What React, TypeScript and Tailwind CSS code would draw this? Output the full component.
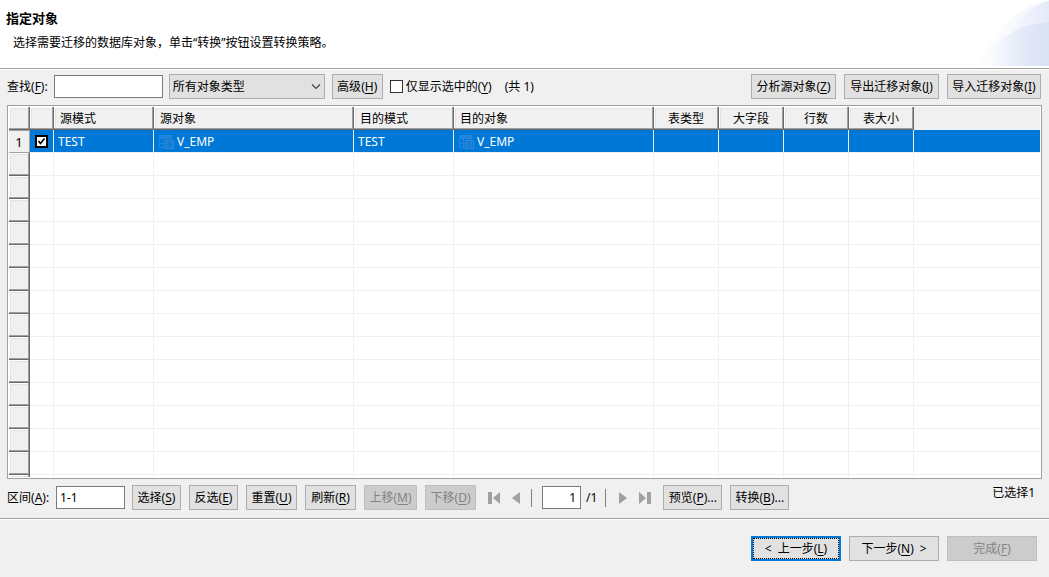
import type { ReactNode } from "react";
import clsx from "clsx";

type Column = { label: string; width: string; center?: boolean };

const columns: Column[] = [
  { label: "源模式", width: "w-[100px]" },
  { label: "源对象", width: "w-[200px]" },
  { label: "目的模式", width: "w-[100px]" },
  { label: "目的对象", width: "w-[200px]" },
  { label: "表类型", width: "w-[65px]", center: true },
  { label: "大字段", width: "w-[65px]", center: true },
  { label: "行数", width: "w-[65px]", center: true },
  { label: "表大小", width: "w-[65px]", center: true },
];

const emptyRows = Array.from({ length: 60 }, (_, i) => i);

const bevel =
  "border-r border-b border-[#696969] bg-[#f0f0f0] shadow-[inset_-1px_-1px_0_#a0a0a0,inset_1px_1px_0_#ffffff,inset_2px_2px_0_#e3e3e3]";

function Key({ children }: { children: string }) {
  return (
    <>
      (<span className="underline underline-offset-2">{children}</span>)
    </>
  );
}

type ButtonProps = { children: ReactNode; width: string; disabled?: boolean; focused?: boolean };

function Button({ children, width, disabled, focused }: ButtonProps) {
  return (
    <button
      type="button"
      disabled={disabled}
      className={clsx(
        "flex h-[25px] shrink-0 items-center justify-center whitespace-pre",
        width,
        disabled ? "border border-[#bfbfbf] bg-[#cccccc] text-[#838383]" : "bg-[#e1e1e1]",
        !disabled && !focused && "border border-[#adadad]",
        focused && "border-2 border-[#0078d7] outline-1 -outline-offset-3 outline-dotted outline-black",
      )}
    >
      {children}
    </button>
  );
}

function ViewIcon() {
  return (
    <svg width="15" height="14" viewBox="0 0 15 14" className="shrink-0" aria-hidden="true">
      <path d="M0 0h13v4H0z" fill="#2285dd" />
      <path d="M.5 4v8.500h6M.5 8.500h6M4.500 4v8.500M8.500 4v2M12.500 4v2" fill="none" stroke="#2285dd" />
      <path d="M6.500 5.500h8v8h-8z" fill="#0c78d4" stroke="#328bdb" />
      <path d="M8 7h2v1H9v1H8zM11 7h2v2h-1V8h-1zM8 10h1v1h1v1H8zM12 10h1v2h-2v-1h1zM10 9h1v1h-1z" fill="#328bdb" />
    </svg>
  );
}

function PagerButton({ label, width, path }: { label: string; width: number; path: string }) {
  return (
    <button type="button" aria-label={label} disabled className="shrink-0">
      <svg width={width} height="12" viewBox={`0 0 ${width} 12`} fill="#a0a0a0">
        <path d={path} />
      </svg>
    </button>
  );
}

function Banner() {
  return (
    <header className="relative h-[68px] shrink-0 bg-white px-1.5 pt-2.5">
      <svg className="absolute top-0 right-0" width="80" height="66" viewBox="0 0 80 66" aria-hidden="true">
        <defs>
          <linearGradient id="outer" x1="0" x2="1" y1="0" y2="0">
            <stop offset="0" stopColor="#ffffff" />
            <stop offset=".2" stopColor="#fdfdff" />
            <stop offset="1" stopColor="#f2f5fc" />
          </linearGradient>
          <linearGradient id="middle" x1="0" x2="1" y1="0" y2="0">
            <stop offset="0" stopColor="#f4f7fd" stopOpacity="0" />
            <stop offset="1" stopColor="#e4eaf8" />
          </linearGradient>
          <linearGradient id="inner" x1="0" x2="1" y1="0" y2="0">
            <stop offset="0" stopColor="#dae2f5" stopOpacity="0" />
            <stop offset=".25" stopColor="#dae2f5" stopOpacity=".1" />
            <stop offset="1" stopColor="#dae2f5" />
          </linearGradient>
        </defs>
        <path d="M6 66C20 36 44 8 80 0v66z" fill="url(#outer)" />
        <path d="M24 66C36 34 54 8 80 1v65z" fill="url(#middle)" />
        <path d="M6 66C22 42 48 24 80 22v44z" fill="url(#inner)" />
      </svg>
      <h1 className="text-[13px] leading-4 font-bold">指定对象</h1>
      <p className="mt-[9px] pl-[7px] leading-4">选择需要迁移的数据库对象，单击“转换”按钮设置转换策略。</p>
    </header>
  );
}

function Toolbar() {
  return (
    <div className="flex items-center px-2 pt-1 pb-1.5">
      <label htmlFor="search" className="mr-1.5 -ml-px shrink-0">
        查找<Key>F</Key>:
      </label>
      <input id="search" className="h-[23px] w-[109px] border border-[#7a7a7a] bg-white px-1 outline-none" />
      <div className="relative ml-1.5">
        <select
          aria-label="对象类型"
          className="h-[25px] w-[156px] appearance-none border border-[#adadad] bg-[#e1e1e1] px-[3px] outline-none"
        >
          <option>所有对象类型</option>
        </select>
        <svg className="pointer-events-none absolute top-2.5 right-1" width="10" height="6" viewBox="0 0 10 6" aria-hidden="true">
          <path d="M1 .5l4 4 4-4" fill="none" stroke="#444444" strokeWidth="1.200" />
        </svg>
      </div>
      <div className="ml-[7px] flex items-center gap-[7px]">
        <Button width="w-[51px]">
          高级<Key>H</Key>
        </Button>
        <label className="flex items-center gap-[3px] whitespace-nowrap">
          <input type="checkbox" className="size-[13px] appearance-none border border-[#333333] bg-white" />
          <span>
            仅显示选中的<Key>Y</Key>
          </span>
        </label>
        <span className="ml-1.5 whitespace-nowrap">(共 1)</span>
      </div>
      <div className="ml-auto flex gap-2">
        <Button width="w-[85px]">
          分析源对象<Key>Z</Key>
        </Button>
        <Button width="w-[95px]">
          导出迁移对象<Key>J</Key>
        </Button>
        <Button width="w-[94px]">
          导入迁移对象<Key>I</Key>
        </Button>
      </div>
    </div>
  );
}

function ObjectTable() {
  const cell = "border-r border-b border-[#f0f0f0]";
  return (
    <div className="mr-[7px] ml-[7px] min-h-0 flex-1 basis-0 overflow-hidden border border-[#a0a0a0] bg-white p-px">
      <div className="h-full overflow-hidden">
        <table className="w-full table-fixed border-separate border-spacing-0">
          <thead>
            <tr className="h-[23px]">
              <th className={clsx("w-[21px] p-0", bevel)} />
              <th className={clsx("w-[24px] p-0", bevel)} />
              {columns.map((col) => (
                <th
                  key={col.label}
                  className={clsx("pt-0.5 pb-0 font-normal", col.width, bevel, col.center ? "px-0 text-center" : "px-1.5 text-left")}
                >
                  {col.label}
                </th>
              ))}
              <th className="bg-[#f0f0f0] p-0" />
            </tr>
          </thead>
          <tbody>
            <tr className="h-[23px] bg-[#0078d7] text-white">
              <th className="border border-l-0 border-[#a0a0a0] bg-[#f0f0f0] p-0 text-[13px] font-normal text-black">1</th>
              <td className={clsx("p-0", cell)}>
                <label className="relative flex justify-center">
                  <input type="checkbox" defaultChecked aria-label="选择 V_EMP" className="sr-only" />
                  <svg width="13" height="13" viewBox="0 0 13 13" aria-hidden="true">
                    <path d="M0 0h13v13H0z" fill="#000000" />
                    <path d="M2 2h9v9H2z" fill="#ffffff" />
                    <path d="M3.500 6l2 2.500 4-5" fill="none" stroke="#000000" strokeWidth="1.600" />
                  </svg>
                </label>
              </td>
              <td className={clsx("px-1 pt-0.5 pb-0", cell)}>TEST</td>
              <td className={clsx("px-[5px] pt-0.5 pb-0", cell)}>
                <span className="flex items-center gap-[3px]">
                  <ViewIcon />
                  V_EMP
                </span>
              </td>
              <td className={clsx("px-1 pt-0.5 pb-0", cell)}>TEST</td>
              <td className={clsx("px-[5px] pt-0.5 pb-0", cell)}>
                <span className="flex items-center gap-[3px]">
                  <ViewIcon />
                  V_EMP
                </span>
              </td>
              <td className={cell} />
              <td className={cell} />
              <td className={cell} />
              <td className={cell} />
              <td className="border-b border-[#f0f0f0]" />
            </tr>
            {emptyRows.map((row) => (
              <tr key={row} className="h-[23px]">
                <th className={clsx("p-0", bevel)} />
                <td className={cell} />
                {columns.map((col) => (
                  <td key={col.label} className={cell} />
                ))}
                <td className="border-b border-[#f0f0f0]" />
              </tr>
            ))}
          </tbody>
        </table>
      </div>
    </div>
  );
}

function ActionBar() {
  return (
    <div className="flex items-center px-2 py-1.5 pb-2">
      <label htmlFor="range" className="mr-1.5 -ml-px w-[43px] shrink-0 whitespace-nowrap">
        区间<Key>A</Key>:
      </label>
      <input
        id="range"
        defaultValue="1-1"
        className="mr-[7px] h-[23px] w-[69px] border border-[#7a7a7a] bg-white px-[3px] outline-none"
      />
      <div className="flex gap-2">
        <Button width="w-[49px]">
          选择<Key>S</Key>
        </Button>
        <Button width="w-[49px]">
          反选<Key>E</Key>
        </Button>
        <Button width="w-[51px]">
          重置<Key>U</Key>
        </Button>
        <Button width="w-[51px]">
          刷新<Key>R</Key>
        </Button>
        <Button width="w-[53px]" disabled>
          上移<Key>M</Key>
        </Button>
        <Button width="w-[51px]" disabled>
          下移<Key>D</Key>
        </Button>
      </div>
      <div className="mx-3 flex items-center">
        <PagerButton label="第一页" width={12} path="M0 0h4v12H0zM12 0v12L5 6z" />
        <span className="w-3" />
        <PagerButton label="上一页" width={8} path="M8 0v12L0 6z" />
        <span className="mr-2.5 ml-[11px] h-[18px] w-px bg-[#808080]" />
        <input
          aria-label="页码"
          defaultValue="1"
          className="h-[23px] w-[39px] border border-[#7a7a7a] bg-white pr-1 text-right outline-none"
        />
        <span className="ml-[5px]">/1</span>
        <span className="mr-[13px] ml-2 h-[18px] w-px bg-[#808080]" />
        <PagerButton label="下一页" width={8} path="M0 0v12L8 6z" />
        <span className="w-3" />
        <PagerButton label="最后一页" width={12} path="M8 0h4v12H8zM0 0v12L7 6z" />
      </div>
      <div className="flex gap-2">
        <Button width="w-[59px]">
          预览<Key>P</Key>...
        </Button>
        <Button width="w-[59px]">
          转换<Key>B</Key>...
        </Button>
      </div>
      <span className="mr-1.5 ml-auto self-start whitespace-nowrap">已选择1</span>
    </div>
  );
}

export default function App() {
  return (
    <div className="flex h-screen flex-col bg-[#f0f0f0] font-['Noto_Sans','Noto_Sans_CJK_SC',sans-serif] text-xs leading-4 text-black">
      <Banner />
      <main className="flex min-h-0 flex-1 flex-col border-t border-[#a0a0a0] shadow-[inset_0_1px_0_#ffffff]">
        <div className="h-px shrink-0" />
        <Toolbar />
        <ObjectTable />
        <ActionBar />
      </main>
      <footer className="flex justify-end gap-2 border-t border-[#a0a0a0] pt-[17px] pr-3 pb-4 shadow-[inset_0_1px_0_#ffffff]">
        <Button width="w-[90px]" focused>
          <span className="mr-1.5">{"<"}</span>上一步<Key>L</Key>
        </Button>
        <Button width="w-[90px]">
          下一步<Key>N</Key>
          <span className="ml-1.5">{">"}</span>
        </Button>
        <Button width="w-[90px]" disabled>
          完成<Key>F</Key>
        </Button>
      </footer>
    </div>
  );
}
